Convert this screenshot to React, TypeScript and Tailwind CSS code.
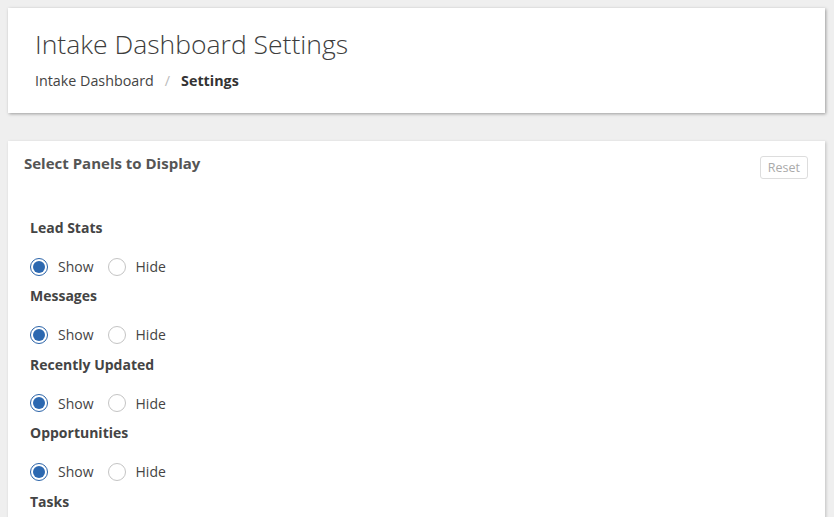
import React from "react";

const PANELS = ["Lead Stats", "Messages", "Recently Updated", "Opportunities", "Tasks"];

function Radio({ checked, label }: { checked: boolean; label: string }) {
  return (
    <label className="flex items-center">
      <span
        className={
          checked
            ? "w-[18px] h-[18px] rounded-full border border-[#2a63a8] flex items-center justify-center bg-white"
            : "w-[18px] h-[18px] rounded-full border border-[#c4c4c4] bg-white"
        }
      >
        {checked && <span className="w-[12px] h-[12px] rounded-full bg-[#2c68b0]" />}
      </span>
      <span className="ml-[10px] text-[14px] text-[#444]">{label}</span>
    </label>
  );
}

export default function App() {
  return (
    <div
      className="h-screen overflow-hidden bg-[#efefef] px-2 pt-2 pr-[9px]"
      style={{ fontFamily: '"Open Sans", sans-serif' }}
    >
      <div className="bg-white h-[105px] shadow-[1px_1px_3px_rgba(0,0,0,0.35)] px-[27px] pt-[23px]">
        <h1 className="text-[26.5px] font-light text-[#3d3d3d] leading-[26.5px]">Intake Dashboard Settings</h1>
        <div className="mt-[13px] text-[14.3px] text-[#444] flex items-center leading-[20px]">
          <span>Intake Dashboard</span>
          <span className="mx-[11px] text-[#bbb]">/</span>
          <span className="font-bold text-[#333]">Settings</span>
        </div>
      </div>

      <div className="mt-[28px] bg-white shadow-[1px_1px_3px_rgba(0,0,0,0.2)] h-[400px]">
        <div className="flex justify-between px-4 pt-[12px] pr-[17px]">
          <h2 className="text-[15px] font-bold text-[#555] leading-[20px]">Select Panels to Display</h2>
          <button className="mt-[3px] h-[23px] px-[7px] border border-[#ddd] rounded-[3px] text-[12.5px] text-[#aaa] leading-[20px]">
            Reset
          </button>
        </div>
        <div className="px-[22px] pt-[39px]">
          {PANELS.map((p) => (
            <div key={p} className="h-[68.4px]">
              <div className="text-[14px] font-bold text-[#444] leading-[20px] h-[38px]">{p}</div>
              <div className="flex items-center gap-[14px]">
                <Radio checked label="Show" />
                <Radio checked={false} label="Hide" />
              </div>
            </div>
          ))}
        </div>
      </div>
    </div>
  );
}
